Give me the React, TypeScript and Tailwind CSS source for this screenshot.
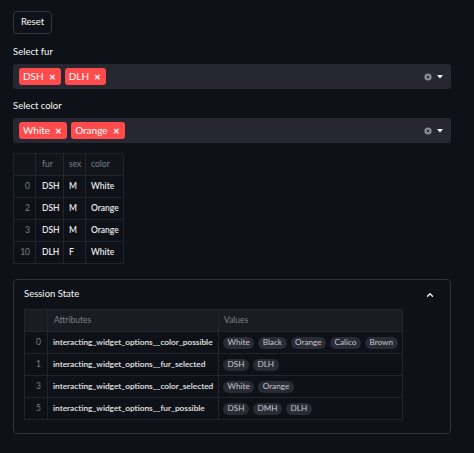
import { ChevronUp } from 'lucide-react';

const FONT = { fontFamily: 'Lato, "Noto Sans", sans-serif' };

const cats = [
  { idx: '0', fur: 'DSH', sex: 'M', color: 'White' },
  { idx: '2', fur: 'DSH', sex: 'M', color: 'Orange' },
  { idx: '3', fur: 'DSH', sex: 'M', color: 'Orange' },
  { idx: '10', fur: 'DLH', sex: 'F', color: 'White' },
];

const session = [
  { idx: '0', attr: 'interacting_widget_options__color_possible', values: ['White', 'Black', 'Orange', 'Calico', 'Brown'] },
  { idx: '1', attr: 'interacting_widget_options__fur_selected', values: ['DSH', 'DLH'] },
  { idx: '3', attr: 'interacting_widget_options__color_selected', values: ['White', 'Orange'] },
  { idx: '5', attr: 'interacting_widget_options__fur_possible', values: ['DSH', 'DMH', 'DLH'] },
];

function Tag({ label }: { label: string }) {
  return (
    <span className="flex h-[17px] items-center gap-[5px] rounded-[3px] bg-[#ff4b4b] pl-[4px] pr-[5px] text-[10px] text-white">
      {label}
      <span className="text-[8px] font-bold">✕</span>
    </span>
  );
}

function MultiSelect({ label, tags }: { label: string; tags: string[] }) {
  return (
    <div>
      <div className="flex h-[12px] items-center text-[9.5px] text-[#fafafa]">{label}</div>
      <div className="mt-[6px] flex h-[25px] items-center rounded-[3px] bg-[#262730] pl-[6px] pr-[8px]">
        <div className="flex flex-1 gap-[4px]">
          {tags.map((t) => (
            <Tag key={t} label={t} />
          ))}
        </div>
        <svg width="8" height="8" viewBox="0 0 8 8" className="mr-[5px]">
          <circle cx="4" cy="4" r="3.6" fill="#8b8d93" />
          <path d="M2.7 2.7 L5.3 5.3 M5.3 2.7 L2.7 5.3" stroke="#262730" strokeWidth="1" />
        </svg>
        <svg width="6" height="4" viewBox="0 0 6 4">
          <path d="M0 0 H6 L3 3.5 Z" fill="#fafafa" />
        </svg>
      </div>
    </div>
  );
}

function Pill({ label }: { label: string }) {
  return (
    <span className="flex h-[12px] items-center rounded-full bg-[#2a2c35] px-[4.5px] text-[8.2px] text-[#c4c6cc]">
      {label}
    </span>
  );
}

export default function App() {
  return (
    <div className="min-h-[453px] bg-[#0e1117] px-[13px] pt-[11px] text-[#fafafa]" style={FONT}>
      <button className="flex h-[23px] w-[39px] items-center justify-center rounded-[4px] border border-[#33353d] text-[9.5px] text-[#fafafa]">
        Reset
      </button>

      <div className="mt-[12px] w-[438px]">
        <MultiSelect label="Select fur" tags={['DSH', 'DLH']} />
      </div>
      <div className="mt-[11px] w-[438px]">
        <MultiSelect label="Select color" tags={['White', 'Orange']} />
      </div>

      {/* dataframe */}
      <div className="mt-[10px] w-[110px] border-l border-t border-[#23252d] text-[8.5px]">
        <div className="grid h-[22px] grid-cols-[22px_28px_22px_38px] bg-[#11141b] text-[#7d8088]">
          <div className="border-b border-r border-[#23252d]" />
          <div className="flex items-center border-b border-r border-[#23252d] pl-[6px]">fur</div>
          <div className="flex items-center border-b border-r border-[#23252d] pl-[5px]">sex</div>
          <div className="flex items-center border-b border-r border-[#23252d] pl-[5px]">color</div>
        </div>
        {cats.map((r) => (
          <div key={r.idx} className="grid h-[22px] grid-cols-[22px_28px_22px_38px] font-semibold text-[#e8e9eb]">
            <div className="flex items-center justify-end border-b border-r border-[#23252d] pr-[5px] font-normal text-[#7d8088]">
              {r.idx}
            </div>
            <div className="flex items-center border-b border-r border-[#23252d] pl-[6px]">{r.fur}</div>
            <div className="flex items-center border-b border-r border-[#23252d] pl-[5px]">{r.sex}</div>
            <div className="flex items-center border-b border-r border-[#23252d] pl-[5px]">{r.color}</div>
          </div>
        ))}
      </div>

      {/* session state expander */}
      <div className="mt-[15px] w-[438px] rounded-[4px] border border-[#30323a] px-[10px] pb-[13px]">
        <div className="flex h-[29px] items-center justify-between pr-[5px] text-[9.5px]">
          <span>Session State</span>
          <ChevronUp size={10} strokeWidth={3} className="text-[#fafafa]" />
        </div>
        <div className="w-[378px] border-l border-t border-[#23252d] text-[8.5px]">
          <div className="grid h-[22px] grid-cols-[23px_171px_184px] bg-[#1a1c23] text-[#7d8088]">
            <div className="border-b border-r border-[#23252d]" />
            <div className="flex items-center border-b border-r border-[#23252d] pl-[6px]">Attributes</div>
            <div className="flex items-center border-b border-r border-[#23252d] pl-[5px]">Values</div>
          </div>
          {session.map((r) => (
            <div key={r.idx} className="grid h-[22px] grid-cols-[23px_171px_184px]">
              <div className="flex items-center justify-end border-b border-r border-[#23252d] pr-[6px] text-[#7d8088]">
                {r.idx}
              </div>
              <div className="flex items-center border-b border-r border-[#23252d] pl-[5px] text-[8.3px] font-semibold text-[#e8e9eb]">
                {r.attr}
              </div>
              <div className="flex items-center gap-[4px] border-b border-r border-[#23252d] pl-[4px]">
                {r.values.map((v) => (
                  <Pill key={v} label={v} />
                ))}
              </div>
            </div>
          ))}
        </div>
      </div>
    </div>
  );
}
